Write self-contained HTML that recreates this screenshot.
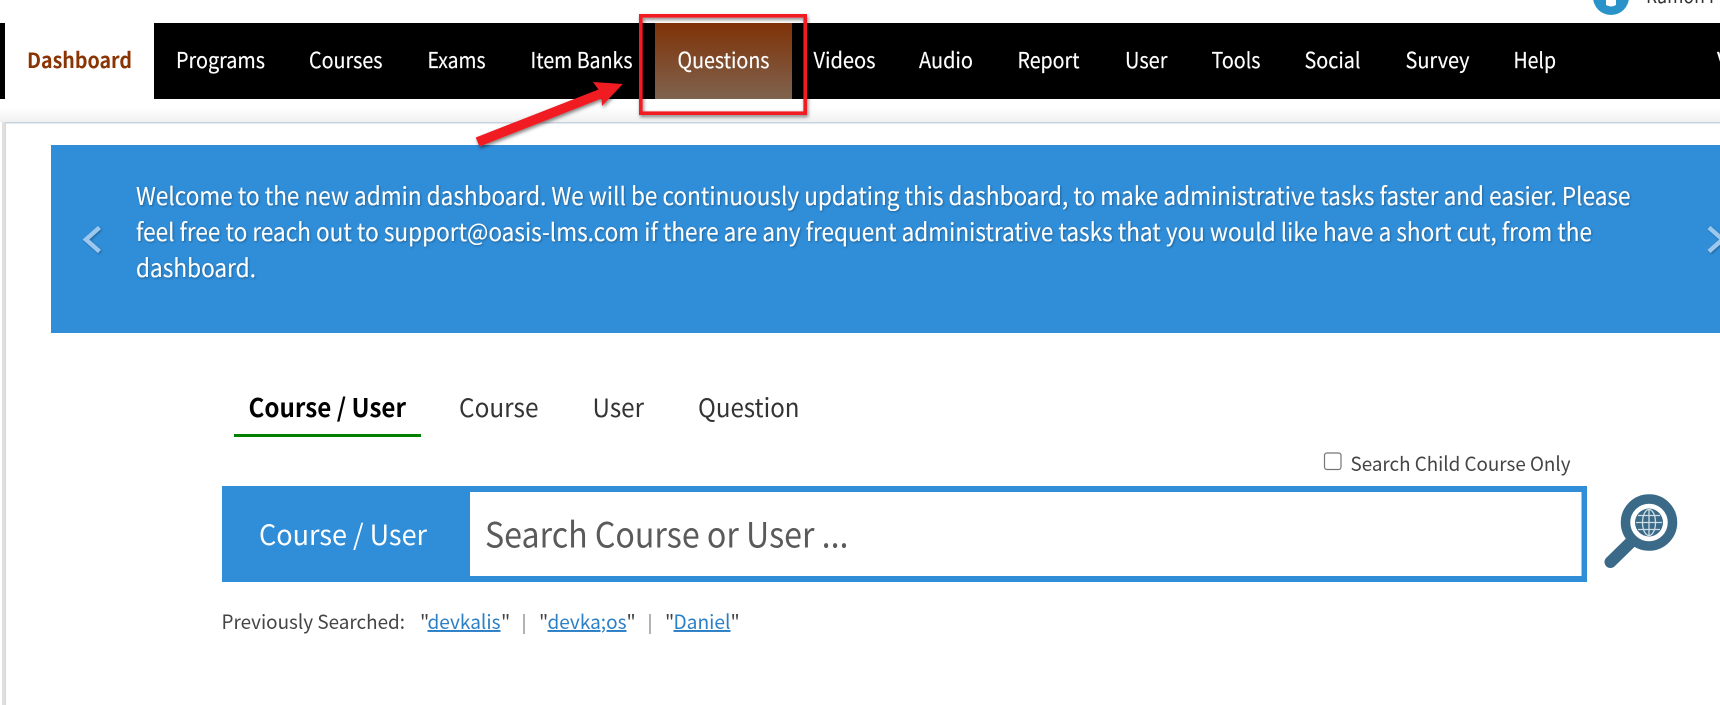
<!DOCTYPE html>
<html lang="en"><head><meta charset="utf-8"><title>Admin Dashboard</title>
<style>
html,body{margin:0;padding:0;background:#fff;width:1720px;height:705px;overflow:hidden}
svg{display:block}
text{font-family:"Noto Sans CJK JP","Liberation Sans",sans-serif;white-space:pre}
.n{font-size:21.5px;fill:#fff;stroke:#fff;stroke-width:.15px}
.b{font-size:24.5px;fill:#fff;stroke:#fff;stroke-width:.12px}
.t{font-size:25.5px;fill:#333}
.p{font-size:19.5px;fill:#444}
.l{fill:#2b7fc6;text-decoration:underline}
</style></head><body>
<svg xmlns="http://www.w3.org/2000/svg" width="1720" height="705" viewBox="0 0 1720 705">
<defs>
<linearGradient id="q" x1="0" y1="0" x2="0" y2="1"><stop offset="0" stop-color="#7f3207"/><stop offset="1" stop-color="#7f634f"/></linearGradient>
<linearGradient id="s" x1="0" y1="0" x2="0" y2="1"><stop offset="0" stop-color="#fff"/><stop offset="1" stop-color="#f0f0f0"/></linearGradient>
<filter id="sh" x="-20%" y="-20%" width="140%" height="150%"><feDropShadow dx="1" dy="2" stdDeviation="1.8" flood-color="#000" flood-opacity=".5"/></filter>
</defs>
<rect width="1720" height="705" fill="#fff"/>

<!-- top user -->
<circle cx="1611" cy="-3" r="18" fill="#2a93c9"/>
<path d="M1606 -2h10v7q-5 3-10 0z" fill="#fff"/>
<text x="1646" y="3" font-size="20" fill="#333" textLength="74" lengthAdjust="spacingAndGlyphs">Ramon P</text>

<!-- nav -->
<rect y="23" width="1720" height="76" fill="#000"/>
<rect x="5" y="23" width="149" height="76" fill="#fff"/>
<rect x="655" y="23" width="137" height="76" fill="url(#q)"/>
<text x="27" y="68" font-size="21" font-weight="700" fill="#8b3403" textLength="105" lengthAdjust="spacingAndGlyphs">Dashboard</text>
<text class="n" x="176" y="68" textLength="89" lengthAdjust="spacingAndGlyphs">Programs</text>
<text class="n" x="309" y="68" textLength="73.5" lengthAdjust="spacingAndGlyphs">Courses</text>
<text class="n" x="427.5" y="68" textLength="58" lengthAdjust="spacingAndGlyphs">Exams</text>
<text class="n" x="530.5" y="68" textLength="102" lengthAdjust="spacingAndGlyphs">Item Banks</text>
<text class="n" x="677.5" y="68" textLength="92" lengthAdjust="spacingAndGlyphs">Questions</text>
<text class="n" x="813.5" y="68" textLength="62" lengthAdjust="spacingAndGlyphs">Videos</text>
<text class="n" x="919" y="68" textLength="54" lengthAdjust="spacingAndGlyphs">Audio</text>
<text class="n" x="1017.5" y="68" textLength="62" lengthAdjust="spacingAndGlyphs">Report</text>
<text class="n" x="1125" y="68" textLength="42.5" lengthAdjust="spacingAndGlyphs">User</text>
<text class="n" x="1211.5" y="68" textLength="49" lengthAdjust="spacingAndGlyphs">Tools</text>
<text class="n" x="1304.5" y="68" textLength="56" lengthAdjust="spacingAndGlyphs">Social</text>
<text class="n" x="1405.5" y="68" textLength="64" lengthAdjust="spacingAndGlyphs">Survey</text>
<text class="n" x="1513.5" y="68" textLength="42.5" lengthAdjust="spacingAndGlyphs">Help</text>
<text class="n" x="1717" y="68">V</text>

<!-- panel -->
<rect x="0" y="108" width="1720" height="14" fill="url(#s)"/>
<rect x="2" y="122" width="1718" height="583" fill="#fff"/>
<rect x="2" y="122" width="1718" height="1.5" fill="#c9d3de"/>
<rect x="2" y="122" width="3" height="583" fill="#dfdfdf"/>
<rect x="5" y="122" width="1" height="583" fill="#cfd9e4"/>

<!-- banner -->
<rect x="51" y="145" width="1669" height="188" fill="#308ed9"/>
<g style="filter:drop-shadow(1px 1px 1px rgba(0,0,0,.3))">
<text class="b" x="136" y="205" textLength="1494.5" lengthAdjust="spacingAndGlyphs">Welcome to the new admin dashboard. We will be continuously updating this dashboard, to make administrative tasks faster and easier. Please</text>
<text class="b" x="136" y="241" textLength="1456" lengthAdjust="spacingAndGlyphs">feel free to reach out to support@oasis-lms.com if there are any frequent administrative tasks that you would like have a short cut, from the</text>
<text class="b" x="136" y="277" textLength="120" lengthAdjust="spacingAndGlyphs">dashboard.</text>
<path d="M99.5 227.5L86 239.5L99.5 251.5" fill="none" stroke="#9cc8ee" stroke-width="4.5"/>
<path d="M1709 227.5L1722.5 239.5L1709 251.5" fill="none" stroke="#9cc8ee" stroke-width="4.5"/>
</g>

<!-- tabs -->
<text x="248.5" y="417" font-size="25.5" font-weight="700" fill="#000" textLength="157.5" lengthAdjust="spacingAndGlyphs">Course / User</text>
<rect x="234" y="434" width="187" height="3" fill="#008000"/>
<text class="t" x="459" y="417" textLength="79.5" lengthAdjust="spacingAndGlyphs">Course</text>
<text class="t" x="592.5" y="417" textLength="51.5" lengthAdjust="spacingAndGlyphs">User</text>
<text class="t" x="698" y="417" textLength="101.5" lengthAdjust="spacingAndGlyphs">Question</text>

<!-- checkbox -->
<rect x="1324.5" y="453" width="16.5" height="16.5" rx="2.5" fill="#fff" stroke="#767676" stroke-width="1.2"/>
<text class="p" x="1350.5" y="471" textLength="220" lengthAdjust="spacingAndGlyphs">Search Child Course Only</text>

<!-- search -->
<rect x="222" y="486" width="1365" height="96" fill="#308ed9"/>
<rect x="470" y="492" width="1111.5" height="84" fill="#fff"/>
<text x="259" y="545" font-size="28" fill="#fff" textLength="168" lengthAdjust="spacingAndGlyphs">Course / User</text>
<text x="485" y="547.5" font-size="35" fill="#5a5a5a" textLength="363.5" lengthAdjust="spacingAndGlyphs">Search Course or User ...</text>

<!-- search icon -->
<g>
<path d="M1610.5 562L1632 541" stroke="#3a6a87" stroke-width="12" stroke-linecap="round" fill="none"/>
<circle cx="1649" cy="522.5" r="23.5" fill="#fff" stroke="#3a6a87" stroke-width="9.5"/>
<circle cx="1649" cy="522.5" r="14" fill="#3a6a87"/>
<g fill="none" stroke="#cfdde6" stroke-width="1.3">
<ellipse cx="1649" cy="522.5" rx="6.5" ry="13"/>
<path d="M1649 509.5v26M1636 522.5h26M1638 515.5h22M1638 529.5h22"/>
</g>
</g>

<!-- previously searched -->
<text class="p" x="221.5" y="629" textLength="183.5" lengthAdjust="spacingAndGlyphs">Previously Searched:</text>
<text class="p" x="420" y="629">"</text>
<text class="p l" x="427.5" y="629" textLength="73" lengthAdjust="spacingAndGlyphs">devkalis</text>
<text class="p" x="501" y="629">"</text>
<rect x="523.5" y="614" width="1" height="20" fill="#666"/>
<text class="p" x="539" y="629">"</text>
<text class="p l" x="547.5" y="629" textLength="79" lengthAdjust="spacingAndGlyphs">devka;os</text>
<text class="p" x="626.5" y="629">"</text>
<rect x="649.5" y="614" width="1" height="20" fill="#666"/>
<text class="p" x="665" y="629">"</text>
<text class="p l" x="673.5" y="629" textLength="57" lengthAdjust="spacingAndGlyphs">Daniel</text>
<text class="p" x="730.5" y="629">"</text>

<!-- annotations -->
<g filter="url(#sh)">
<rect x="640.8" y="15.8" width="164.4" height="97.4" fill="none" stroke="#f01c22" stroke-width="3.6"/>
<path d="M475.7 137.5L598.5 89.5L593 82L622.7 84L602 106L601.5 98.5L479.5 146.5Z" fill="#f01c22"/>
</g>
</svg>
</body></html>
